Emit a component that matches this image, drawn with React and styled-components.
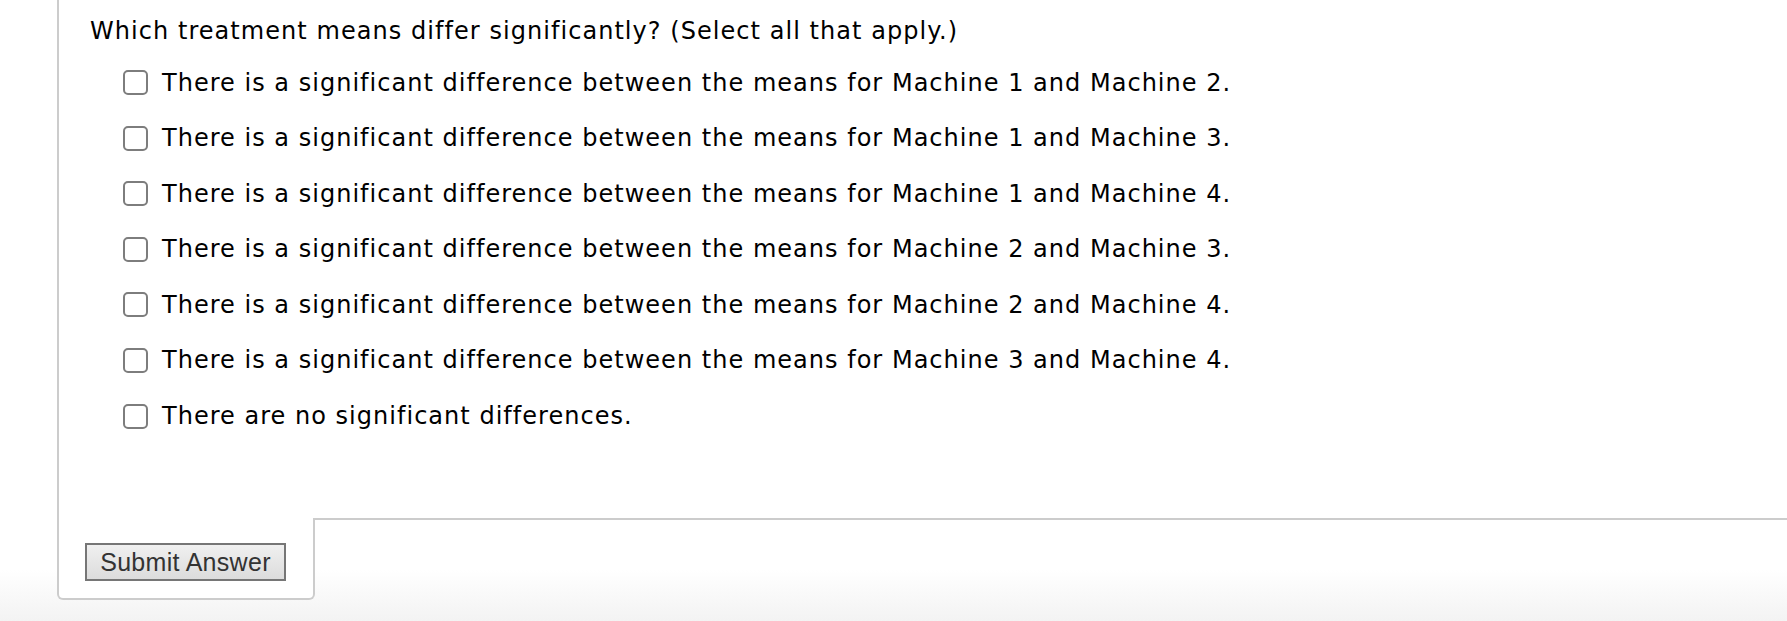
import React from "react";
import styled, { createGlobalStyle } from "styled-components";

const GlobalStyle = createGlobalStyle`
  html, body {
    margin: 0;
    padding: 0;
  }

  body {
    min-height: 621px;
    background: linear-gradient(to bottom, #ffffff 0px, #ffffff 570px, #f3f3f3 621px);
    font-family: "DejaVu Sans", Verdana, sans-serif;
    color: #000000;
  }
`;

const options = [
  "There is a significant difference between the means for Machine 1 and Machine 2.",
  "There is a significant difference between the means for Machine 1 and Machine 3.",
  "There is a significant difference between the means for Machine 1 and Machine 4.",
  "There is a significant difference between the means for Machine 2 and Machine 3.",
  "There is a significant difference between the means for Machine 2 and Machine 4.",
  "There is a significant difference between the means for Machine 3 and Machine 4.",
  "There are no significant differences.",
];

const App = () => {
  return (
    <>
      <GlobalStyle />
      <Page>
        <QuestionBody>
          <Prompt>Which treatment means differ significantly? (Select all that apply.)</Prompt>
          <OptionList>
            {options.map((text) => (
              <OptionRow key={text}>
                <Checkbox type="checkbox" />
                <span>{text}</span>
              </OptionRow>
            ))}
          </OptionList>
        </QuestionBody>
        <Footer>
          <SubmitTab>
            <SubmitButton type="button">Submit Answer</SubmitButton>
          </SubmitTab>
          <FooterRule />
        </Footer>
      </Page>
    </>
  );
};

const Page = styled.div`
  display: flex;
  flex-direction: column;
  margin-left: 57px;
`;

const QuestionBody = styled.div`
  border-left: 2px solid #cccccc;
  padding: 17px 0 88px 31px;
`;

const Prompt = styled.p`
  margin: 0;
  font-size: 24px;
  letter-spacing: 1.05px;
  line-height: 28px;
`;

const OptionList = styled.div`
  display: flex;
  flex-direction: column;
  gap: 27.6px;
  margin-top: 23.5px;
  padding-left: 33px;
`;

const OptionRow = styled.label`
  display: flex;
  align-items: center;
  gap: 14px;
  font-size: 24px;
  letter-spacing: 1.02px;
  line-height: 28px;
`;

const Checkbox = styled.input`
  appearance: none;
  flex: 0 0 auto;
  width: 25px;
  height: 25px;
  margin: 0;
  border: 2px solid #7d7d7d;
  border-radius: 5px;
  background: #ffffff;
  box-sizing: border-box;
`;

const Footer = styled.div`
  display: flex;
  height: 82px;
`;

const SubmitTab = styled.div`
  flex: 0 0 258px;
  box-sizing: border-box;
  border-left: 2px solid #cccccc;
  border-right: 2px solid #cccccc;
  border-bottom: 2px solid #cccccc;
  border-radius: 0 0 6px 6px;
  background: #ffffff;
  padding: 25px 0 0 26px;
`;

const FooterRule = styled.div`
  flex: 1;
  border-top: 2px solid #cccccc;
`;

const SubmitButton = styled.button`
  width: 201px;
  height: 38px;
  box-sizing: border-box;
  border: 2px solid #767676;
  background: linear-gradient(to bottom, #f0f0f0, #dcdcdc);
  font-family: "Liberation Sans", Arial, sans-serif;
  font-size: 25px;
  letter-spacing: 0.3px;
  color: #333333;
  padding: 0;
  line-height: 34px;
`;

export default App;
